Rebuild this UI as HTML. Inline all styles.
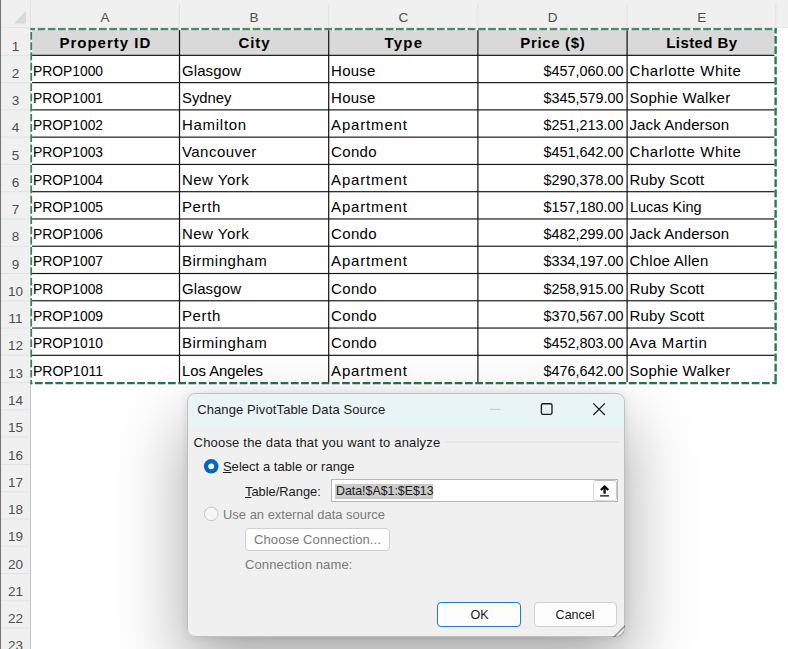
<!DOCTYPE html>
<html><head><meta charset="utf-8"><title>Excel</title>
<style>
html,body{margin:0;padding:0;}
body{width:788px;height:649px;overflow:hidden;background:#fff;position:relative;font-family:"Liberation Sans",sans-serif;}
.abs{position:absolute;}
.colhdr{left:0;top:0;width:788px;height:28px;background:#f0f0f0;}
.rowhdr{left:0;top:0;width:30px;height:649px;background:#f0f0f0;}
.leftbar{left:0;top:0;width:1px;height:649px;background:#747474;}
.cl{position:absolute;top:4.1px;height:28px;line-height:28px;text-align:center;color:#4f4f4f;font-size:13.5px;}
.rn{position:absolute;left:1px;width:29px;text-align:center;color:#4f4f4f;font-size:13.5px;height:14px;line-height:14px;}
.t{position:absolute;white-space:nowrap;color:#000;font-size:15px;height:16px;line-height:16px;transform-origin:0 50%;}
.tr{transform-origin:100% 50%;text-align:right;}
.tc{transform-origin:50% 50%;text-align:center;}
.b{font-weight:bold;}
.dlg{left:187px;top:393px;width:438.3px;height:243.7px;background:#f0f0f0;border-radius:8px;
 box-shadow:0 32px 70px 3px rgba(0,0,0,0.33), 0 1px 8px rgba(0,0,0,0.10);overflow:hidden;}
.dlg::after{content:'';position:absolute;left:0;top:0;right:0;bottom:0;border:1px solid rgba(0,0,0,0.2);border-radius:8px;box-sizing:border-box;pointer-events:none;}
.inner{left:0;top:-1px;width:439px;height:245px;}
.dt{position:absolute;white-space:nowrap;font-size:13px;color:#1a1a1a;height:16px;line-height:16px;transform-origin:0 50%;}
.gray{color:#7b7b7b;}
.btn{position:absolute;background:#fdfdfd;border:1px solid #d0d0d0;border-radius:4px;box-sizing:border-box;}
</style></head><body>

<div class="abs colhdr"></div><div class="abs rowhdr"></div><div class="abs leftbar"></div>
<svg class="abs" style="left:0;top:0" width="788" height="649" viewBox="0 0 788 649">
<rect x="1" y="27" width="787" height="1" fill="#e4e4e4"/>
<rect x="30" y="0" width="1" height="28" fill="#e2e2e2"/>
<rect x="30" y="28" width="1" height="621" fill="#c4c4c4"/>
<rect x="179.00" y="4" width="1" height="23" fill="#e0e0e0"/>
<rect x="328.20" y="4" width="1" height="23" fill="#e0e0e0"/>
<rect x="477.40" y="4" width="1" height="23" fill="#e0e0e0"/>
<rect x="626.60" y="4" width="1" height="23" fill="#e0e0e0"/>
<rect x="775.40" y="4" width="1" height="23" fill="#e0e0e0"/>
<rect x="1" y="54.85" width="29" height="1" fill="#e2e2e2"/>
<rect x="1" y="82.12" width="29" height="1" fill="#e2e2e2"/>
<rect x="1" y="109.39" width="29" height="1" fill="#e2e2e2"/>
<rect x="1" y="136.66" width="29" height="1" fill="#e2e2e2"/>
<rect x="1" y="163.93" width="29" height="1" fill="#e2e2e2"/>
<rect x="1" y="191.20" width="29" height="1" fill="#e2e2e2"/>
<rect x="1" y="218.47" width="29" height="1" fill="#e2e2e2"/>
<rect x="1" y="245.74" width="29" height="1" fill="#e2e2e2"/>
<rect x="1" y="273.01" width="29" height="1" fill="#e2e2e2"/>
<rect x="1" y="300.28" width="29" height="1" fill="#e2e2e2"/>
<rect x="1" y="327.55" width="29" height="1" fill="#e2e2e2"/>
<rect x="1" y="354.82" width="29" height="1" fill="#e2e2e2"/>
<rect x="1" y="382.09" width="29" height="1" fill="#e2e2e2"/>
<rect x="1" y="409.36" width="29" height="1" fill="#e2e2e2"/>
<rect x="1" y="436.63" width="29" height="1" fill="#e2e2e2"/>
<rect x="1" y="463.90" width="29" height="1" fill="#e2e2e2"/>
<rect x="1" y="491.17" width="29" height="1" fill="#e2e2e2"/>
<rect x="1" y="518.44" width="29" height="1" fill="#e2e2e2"/>
<rect x="1" y="545.71" width="29" height="1" fill="#e2e2e2"/>
<rect x="1" y="572.98" width="29" height="1" fill="#e2e2e2"/>
<rect x="1" y="600.25" width="29" height="1" fill="#e2e2e2"/>
<rect x="1" y="627.52" width="29" height="1" fill="#e2e2e2"/>
<rect x="1" y="654.79" width="29" height="1" fill="#e2e2e2"/>
<path d="M26 11 L26 23.6 L13.4 23.6 Z" fill="#dadada"/>
<rect x="31.25" y="28" width="744.35" height="27.35" fill="#d9d9d9"/>
<rect x="31.25" y="54.77" width="744.35" height="1.16" fill="#151515"/>
<rect x="31.25" y="82.04" width="744.35" height="1.16" fill="#151515"/>
<rect x="31.25" y="109.31" width="744.35" height="1.16" fill="#151515"/>
<rect x="31.25" y="136.58" width="744.35" height="1.16" fill="#151515"/>
<rect x="31.25" y="163.85" width="744.35" height="1.16" fill="#151515"/>
<rect x="31.25" y="191.12" width="744.35" height="1.16" fill="#151515"/>
<rect x="31.25" y="218.39" width="744.35" height="1.16" fill="#151515"/>
<rect x="31.25" y="245.66" width="744.35" height="1.16" fill="#151515"/>
<rect x="31.25" y="272.93" width="744.35" height="1.16" fill="#151515"/>
<rect x="31.25" y="300.20" width="744.35" height="1.16" fill="#151515"/>
<rect x="31.25" y="327.47" width="744.35" height="1.16" fill="#151515"/>
<rect x="31.25" y="354.74" width="744.35" height="1.16" fill="#151515"/>
<rect x="178.90" y="29" width="1.2" height="353.59" fill="#111"/>
<rect x="328.10" y="29" width="1.2" height="353.59" fill="#111"/>
<rect x="477.30" y="29" width="1.2" height="353.59" fill="#111"/>
<rect x="626.50" y="29" width="1.2" height="353.59" fill="#111"/>
<line x1="30.45" y1="29.10" x2="776.80" y2="29.10" stroke="#fff" stroke-width="2.1"/>
<line x1="30.45" y1="383.09" x2="776.80" y2="383.09" stroke="#fff" stroke-width="2.3"/>
<line x1="31.25" y1="28.20" x2="31.25" y2="384.19" stroke="#fff" stroke-width="1.7"/>
<line x1="775.60" y1="28.20" x2="775.60" y2="384.19" stroke="#fff" stroke-width="2.4"/>
<line x1="30.45" y1="29.10" x2="776.80" y2="29.10" stroke="#4a8a66" stroke-width="2.1" stroke-dasharray="7.74 2.5" stroke-dashoffset="3.09"/>
<line x1="30.45" y1="383.09" x2="776.80" y2="383.09" stroke="#23744a" stroke-width="2.3" stroke-dasharray="7.74 2.5" stroke-dashoffset="5.81"/>
<line x1="31.25" y1="28.20" x2="31.25" y2="384.19" stroke="#357f58" stroke-width="1.7" stroke-dasharray="7.74 2.5" stroke-dashoffset="6.48"/>
<line x1="775.60" y1="28.20" x2="775.60" y2="384.19" stroke="#2b7a50" stroke-width="2.4" stroke-dasharray="7.74 2.5" stroke-dashoffset="2.44"/>
</svg>
<div class="cl" style="left:84.9px;width:40px">A</div>
<div class="cl" style="left:234.1px;width:40px">B</div>
<div class="cl" style="left:383.3px;width:40px">C</div>
<div class="cl" style="left:532.5px;width:40px">D</div>
<div class="cl" style="left:681.7px;width:40px">E</div>
<div class="rn" style="top:39.5px">1</div>
<div class="rn" style="top:66.7px">2</div>
<div class="rn" style="top:94.0px">3</div>
<div class="rn" style="top:121.3px">4</div>
<div class="rn" style="top:148.5px">5</div>
<div class="rn" style="top:175.8px">6</div>
<div class="rn" style="top:203.1px">7</div>
<div class="rn" style="top:230.3px">8</div>
<div class="rn" style="top:257.6px">9</div>
<div class="rn" style="top:284.9px">10</div>
<div class="rn" style="top:312.2px">11</div>
<div class="rn" style="top:339.4px">12</div>
<div class="rn" style="top:366.7px">13</div>
<div class="rn" style="top:394.0px">14</div>
<div class="rn" style="top:421.2px">15</div>
<div class="rn" style="top:448.5px">16</div>
<div class="rn" style="top:475.8px">17</div>
<div class="rn" style="top:503.0px">18</div>
<div class="rn" style="top:530.3px">19</div>
<div class="rn" style="top:557.6px">20</div>
<div class="rn" style="top:584.9px">21</div>
<div class="rn" style="top:612.1px">22</div>
<div class="rn" style="top:639.4px">23</div>
<div class="t tc b" style="left:34.9px;width:140px;top:34.9px;letter-spacing:1.004px;padding-left:1.004px;box-sizing:border-box">Property ID</div>
<div class="t tc b" style="left:184.1px;width:140px;top:34.9px;letter-spacing:0.885px;padding-left:0.885px;box-sizing:border-box">City</div>
<div class="t tc b" style="left:333.3px;width:140px;top:34.9px;letter-spacing:1.198px;padding-left:1.198px;box-sizing:border-box">Type</div>
<div class="t tc b" style="left:482.5px;width:140px;top:34.9px;letter-spacing:0.637px;padding-left:0.637px;box-sizing:border-box">Price ($)</div>
<div class="t tc b" style="left:631.7px;width:140px;top:34.9px;letter-spacing:0.423px;padding-left:0.423px;box-sizing:border-box">Listed By</div>
<div class="t" style="left:32.7px;top:62.6px;transform:scaleX(0.9230);">PROP1000</div>
<div class="t" style="left:181.9px;top:62.6px;letter-spacing:0.130px;">Glasgow</div>
<div class="t" style="left:331.1px;top:62.6px;letter-spacing:0.209px;">House</div>
<div class="t tr" style="right:164.2px;top:62.6px;transform:scaleX(0.9590);">$457,060.00</div>
<div class="t" style="left:629.5px;top:62.6px;letter-spacing:0.568px;">Charlotte White</div>
<div class="t" style="left:32.7px;top:89.8px;transform:scaleX(0.9230);">PROP1001</div>
<div class="t" style="left:181.9px;top:89.8px;transform:scaleX(0.9895);">Sydney</div>
<div class="t" style="left:331.1px;top:89.8px;letter-spacing:0.209px;">House</div>
<div class="t tr" style="right:164.2px;top:89.8px;transform:scaleX(0.9590);">$345,579.00</div>
<div class="t" style="left:629.5px;top:89.8px;letter-spacing:0.310px;">Sophie Walker</div>
<div class="t" style="left:32.7px;top:117.1px;transform:scaleX(0.9230);">PROP1002</div>
<div class="t" style="left:181.9px;top:117.1px;letter-spacing:0.732px;">Hamilton</div>
<div class="t" style="left:331.1px;top:117.1px;letter-spacing:0.824px;">Apartment</div>
<div class="t tr" style="right:164.2px;top:117.1px;transform:scaleX(0.9590);">$251,213.00</div>
<div class="t" style="left:629.5px;top:117.1px;letter-spacing:0.096px;">Jack Anderson</div>
<div class="t" style="left:32.7px;top:144.4px;transform:scaleX(0.9230);">PROP1003</div>
<div class="t" style="left:181.9px;top:144.4px;letter-spacing:0.482px;">Vancouver</div>
<div class="t" style="left:331.1px;top:144.4px;letter-spacing:0.314px;">Condo</div>
<div class="t tr" style="right:164.2px;top:144.4px;transform:scaleX(0.9590);">$451,642.00</div>
<div class="t" style="left:629.5px;top:144.4px;letter-spacing:0.568px;">Charlotte White</div>
<div class="t" style="left:32.7px;top:171.6px;transform:scaleX(0.9230);">PROP1004</div>
<div class="t" style="left:181.9px;top:171.6px;letter-spacing:0.508px;">New York</div>
<div class="t" style="left:331.1px;top:171.6px;letter-spacing:0.824px;">Apartment</div>
<div class="t tr" style="right:164.2px;top:171.6px;transform:scaleX(0.9590);">$290,378.00</div>
<div class="t" style="left:629.5px;top:171.6px;letter-spacing:0.134px;">Ruby Scott</div>
<div class="t" style="left:32.7px;top:198.9px;transform:scaleX(0.9230);">PROP1005</div>
<div class="t" style="left:181.9px;top:198.9px;letter-spacing:0.634px;">Perth</div>
<div class="t" style="left:331.1px;top:198.9px;letter-spacing:0.824px;">Apartment</div>
<div class="t tr" style="right:164.2px;top:198.9px;transform:scaleX(0.9590);">$157,180.00</div>
<div class="t" style="left:629.5px;top:198.9px;transform:scaleX(0.9643);">Lucas King</div>
<div class="t" style="left:32.7px;top:226.2px;transform:scaleX(0.9230);">PROP1006</div>
<div class="t" style="left:181.9px;top:226.2px;letter-spacing:0.508px;">New York</div>
<div class="t" style="left:331.1px;top:226.2px;letter-spacing:0.314px;">Condo</div>
<div class="t tr" style="right:164.2px;top:226.2px;transform:scaleX(0.9590);">$482,299.00</div>
<div class="t" style="left:629.5px;top:226.2px;letter-spacing:0.096px;">Jack Anderson</div>
<div class="t" style="left:32.7px;top:253.4px;transform:scaleX(0.9230);">PROP1007</div>
<div class="t" style="left:181.9px;top:253.4px;letter-spacing:0.524px;">Birmingham</div>
<div class="t" style="left:331.1px;top:253.4px;letter-spacing:0.824px;">Apartment</div>
<div class="t tr" style="right:164.2px;top:253.4px;transform:scaleX(0.9590);">$334,197.00</div>
<div class="t" style="left:629.5px;top:253.4px;letter-spacing:0.290px;">Chloe Allen</div>
<div class="t" style="left:32.7px;top:280.7px;transform:scaleX(0.9230);">PROP1008</div>
<div class="t" style="left:181.9px;top:280.7px;letter-spacing:0.130px;">Glasgow</div>
<div class="t" style="left:331.1px;top:280.7px;letter-spacing:0.314px;">Condo</div>
<div class="t tr" style="right:164.2px;top:280.7px;transform:scaleX(0.9590);">$258,915.00</div>
<div class="t" style="left:629.5px;top:280.7px;letter-spacing:0.134px;">Ruby Scott</div>
<div class="t" style="left:32.7px;top:308.0px;transform:scaleX(0.9230);">PROP1009</div>
<div class="t" style="left:181.9px;top:308.0px;letter-spacing:0.634px;">Perth</div>
<div class="t" style="left:331.1px;top:308.0px;letter-spacing:0.314px;">Condo</div>
<div class="t tr" style="right:164.2px;top:308.0px;transform:scaleX(0.9590);">$370,567.00</div>
<div class="t" style="left:629.5px;top:308.0px;letter-spacing:0.134px;">Ruby Scott</div>
<div class="t" style="left:32.7px;top:335.3px;transform:scaleX(0.9230);">PROP1010</div>
<div class="t" style="left:181.9px;top:335.3px;letter-spacing:0.524px;">Birmingham</div>
<div class="t" style="left:331.1px;top:335.3px;letter-spacing:0.314px;">Condo</div>
<div class="t tr" style="right:164.2px;top:335.3px;transform:scaleX(0.9590);">$452,803.00</div>
<div class="t" style="left:629.5px;top:335.3px;letter-spacing:0.646px;">Ava Martin</div>
<div class="t" style="left:32.7px;top:362.5px;transform:scaleX(0.9369);">PROP1011</div>
<div class="t" style="left:181.9px;top:362.5px;transform:scaleX(0.9891);">Los Angeles</div>
<div class="t" style="left:331.1px;top:362.5px;letter-spacing:0.824px;">Apartment</div>
<div class="t tr" style="right:164.2px;top:362.5px;transform:scaleX(0.9590);">$476,642.00</div>
<div class="t" style="left:629.5px;top:362.5px;letter-spacing:0.310px;">Sophie Walker</div>
<div class="abs dlg"><div class="abs inner">
<div class="abs" style="left:0;top:0;width:439px;height:35px;background:#e9f4f6"></div>
<div class="dt " style="left:10.2px;top:9.5px;letter-spacing:0.107px;">Change PivotTable Data Source</div>
<svg class="abs" style="left:0;top:0" width="439" height="245" viewBox="0 0 439 245"><path d="M303 17.3 H313.7" stroke="#c4c9cc" stroke-width="1" fill="none"/><rect x="354.4" y="11.7" width="10.6" height="10.6" rx="1.6" fill="none" stroke="#1e1e1e" stroke-width="1.35"/><path d="M406.3 11.4 L417.9 23 M417.9 11.4 L406.3 23" stroke="#1e1e1e" stroke-width="1.25" fill="none"/><path d="M257.5 50 H431" stroke="#dcdcdc" stroke-width="1" fill="none"/><circle cx="24.2" cy="74.3" r="7.3" fill="#0067c0"/><circle cx="24.2" cy="74.3" r="2.9" fill="#fff"/><circle cx="24.2" cy="121.9" r="6.8" fill="#f6f6f6" stroke="#c6c6c6" stroke-width="1"/><path d="M426.7 245 L438.1 233.4 L438.1 245 Z" fill="#c9c9c9"/><path d="M426.3 245.6 L438.7 233" stroke="#9c9c9c" stroke-width="1.5" fill="none"/><path d="M428.7 245.8 L438.9 235.4" stroke="#f4f4f4" stroke-width="1.1" fill="none"/></svg>
<div class="dt " style="left:6.6px;top:42.9px;letter-spacing:0.189px;">Choose the data that you want to analyze</div>
<div class="dt " style="left:35.9px;top:66.9px;letter-spacing:0.036px;"><u>S</u>elect a table or range</div>
<div class="dt " style="left:57.9px;top:91.7px;transform:scaleX(0.9892);"><u>T</u>able/Range:</div>
<div class="abs" style="left:144.4px;top:87px;width:286.4px;height:22.5px;background:#fff;border:1px solid #b3b6bb;box-sizing:border-box"></div>
<div class="abs" style="left:148px;top:91.9px;width:98.4px;height:15px;background:#cbcbcb"></div>
<div class="dt " style="left:148.6px;top:91.4px;transform:scaleX(0.9509);">Data!$A$1:$E$13</div>
<div class="btn" style="left:406.4px;top:88px;width:23.6px;height:20.6px;border-color:#dcdcdc;border-top-color:#b9bcc0;border-right-color:#c4c6ca;border-radius:3.5px;background:#fff"></div>
<svg class="abs" style="left:0;top:0" width="439" height="245" viewBox="0 0 439 245"><path d="M413.9 98 L417.6 94.5 L421.3 98" fill="none" stroke="#0a0a0a" stroke-width="2.3" stroke-linecap="butt" stroke-linejoin="miter"/><path d="M417.6 94.5 V101.7" stroke="#0a0a0a" stroke-width="2.3" fill="none"/><rect x="413.1" y="103.1" width="9" height="1.5" fill="#333"/></svg>
<div class="dt gray" style="left:35.9px;top:114.9px;transform:scaleX(0.9963);">Use an external data source</div>
<div class="btn" style="left:58.1px;top:135.8px;width:145.2px;height:23.6px"></div>
<div class="dt gray" style="left:67px;top:139.6px;letter-spacing:0.098px;">Choose Connection...</div>
<div class="dt gray" style="left:58px;top:164.9px;letter-spacing:0.126px;">Connection name:</div>
<div class="btn" style="left:250.4px;top:210.4px;width:83.7px;height:24.4px;border:1.5px solid #2577c9"></div>
<div class="dt tc " style="left:251.6px;width:83.7px;top:214.5px;transform:scaleX(0.9682);">OK</div>
<div class="btn" style="left:346.6px;top:210.4px;width:83.2px;height:24.4px"></div>
<div class="dt tc " style="left:347.8px;width:83.2px;top:214.5px;transform:scaleX(0.9637);">Cancel</div>
</div></div>
</body></html>
